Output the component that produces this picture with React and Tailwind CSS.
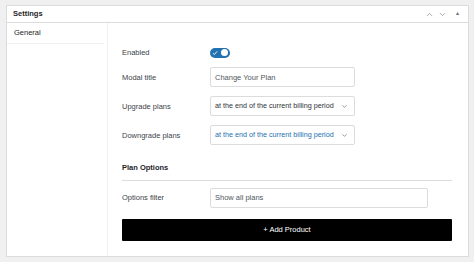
import { ChevronUp, ChevronDown } from 'lucide-react';

const Row = ({ label, children }) => (
    <div className="flex items-center">
        <div className="w-[88px] text-[7.5px] text-[#3c434a]">{label}</div>
        {children}
    </div>
);

const Select = ({ value, blue }) => (
    <div className="w-[145px] h-[20px] border border-[#dcdcde] rounded-[2px] flex items-center justify-between pl-[4px] pr-[6px] bg-white">
        <span className={`whitespace-nowrap text-[7.2px] ${blue ? 'text-[#2271b1]' : 'text-[#2c3338]'}`}>{value}</span>
        <ChevronDown size={7} strokeWidth={2} className="text-[#50575e]" />
    </div>
);

export default function App() {
    return (
        <div className="w-[474px] h-[262px] bg-[#f0f0f1] pt-[5px] pl-[6px]" style={{ fontFamily: '"Liberation Sans", Arial, sans-serif' }}>
            <div className="w-[463px] h-[252px] bg-white border border-[#dcdcde] flex flex-col">
                {/* Header */}
                <div className="h-[17px] border-b border-[#dcdcde] flex items-center justify-between pl-[6px] pr-[8px]">
                    <span className="text-[7.5px] font-bold text-[#1d2327]">Settings</span>
                    <div className="flex items-center gap-[4px] text-[#646970]">
                        <ChevronUp size={9} strokeWidth={1.5} />
                        <ChevronDown size={9} strokeWidth={1.5} />
                        <span className="text-[5px] ml-[4px]">▲</span>
                    </div>
                </div>

                <div className="flex flex-1">
                    {/* Sidebar */}
                    <div className="w-[101px] border-r border-[#f0f0f1]">
                        <div className="h-[21px] border-b border-[#f0f0f1] mr-[3px] flex items-center pl-[7px] text-[7.5px] text-[#1d2327]">
                            General
                        </div>
                    </div>

                    {/* Content */}
                    <div className="flex-1 pl-[14px] pr-[16px] pt-[24px]">
                        <div className="flex flex-col gap-[9px]">
                            <Row label="Enabled">
                                <div className="w-[20px] h-[10px] rounded-full bg-[#2271b1] flex items-center justify-between px-[2px]">
                                    <svg width="6" height="6" viewBox="0 0 8 8">
                                        <path d="M1.2 4.2 L3.2 6 L6.8 1.8" stroke="white" strokeWidth="1.2" fill="none" />
                                    </svg>
                                    <div className="w-[7px] h-[7px] rounded-full bg-white" />
                                </div>
                            </Row>
                            <Row label="Modal title">
                                <div className="w-[145px] h-[20px] border border-[#dcdcde] rounded-[2px] flex items-center pl-[4px] text-[7.5px] text-[#50575e]">
                                    Change Your Plan
                                </div>
                            </Row>
                            <Row label="Upgrade plans">
                                <Select value="at the end of the current billing period" />
                            </Row>
                            <Row label="Downgrade plans">
                                <Select value="at the end of the current billing period" blue />
                            </Row>
                        </div>

                        <div className="mt-[17px] border-b border-[#dcdcde] pb-[6px] text-[7.5px] font-bold text-[#1d2327]">
                            Plan Options
                        </div>

                        <div className="mt-[7px]">
                            <Row label="Options filter">
                                <div className="w-[218px] h-[20px] border border-[#dcdcde] rounded-[2px] flex items-center pl-[4px] text-[7.5px] text-[#50575e]">
                                    Show all plans
                                </div>
                            </Row>
                        </div>

                        <div className="mt-[11px] h-[22px] bg-black rounded-[1px] flex items-center justify-center text-white text-[7.5px]">
                            + Add Product
                        </div>
                    </div>
                </div>
            </div>
        </div>
    );
}
